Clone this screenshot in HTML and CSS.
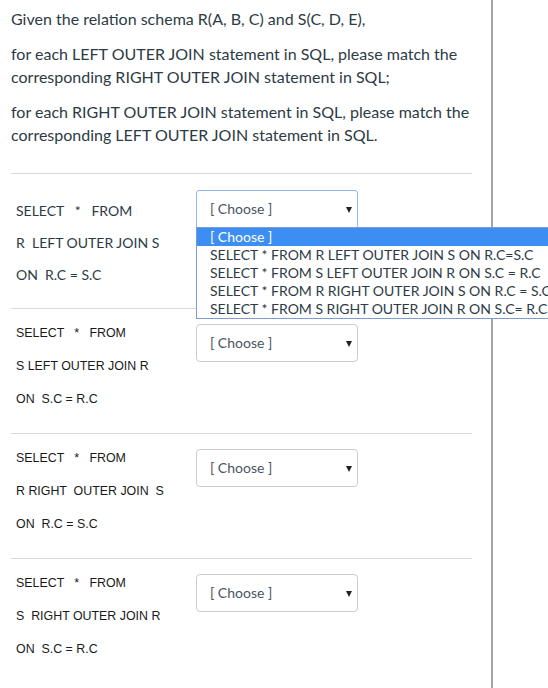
FILE: index.html
```html
<!DOCTYPE html>
<html lang="en">
<head>
    <meta charset="UTF-8">
    <meta name="viewport" content="width=device-width, initial-scale=1.0">
    <title>Matching</title>
    <link rel="stylesheet" href="styles.css">
</head>
<body>
    <div class="page">
        <main class="question">
            <div class="q-text">
                <p>Given the relation schema R(A, B, C) and S(C, D, E),</p>
                <p>for each LEFT OUTER JOIN statement in SQL, please match the corresponding RIGHT OUTER JOIN statement in SQL;</p>
                <p>for each RIGHT OUTER JOIN statement in SQL, please match the corresponding LEFT OUTER JOIN statement in SQL.</p>
            </div>

            <div class="m-row first">
                <div class="answer lato">
                    <p>SELECT &nbsp; * &nbsp; FROM</p>
                    <p>R &nbsp;LEFT OUTER JOIN S</p>
                    <p>ON &nbsp;R.C = S.C</p>
                </div>
                <div class="pick">
                    <div class="choose open">[ Choose ]<span class="arrow"></span></div>
                    <ul class="options">
                        <li class="sel">[ Choose ]</li>
                        <li>SELECT * FROM R LEFT OUTER JOIN S ON R.C=S.C</li>
                        <li>SELECT * FROM S LEFT OUTER JOIN R ON S.C = R.C</li>
                        <li>SELECT * FROM R RIGHT OUTER JOIN S ON R.C = S.C</li>
                        <li>SELECT * FROM S RIGHT OUTER JOIN R ON S.C= R.C</li>
                    </ul>
                </div>
            </div>

            <div class="m-row">
                <div class="answer">
                    <p>SELECT &nbsp; * &nbsp; FROM</p>
                    <p>S LEFT OUTER JOIN R</p>
                    <p>ON &nbsp;S.C = R.C</p>
                </div>
                <div class="pick">
                    <div class="choose">[ Choose ]<span class="arrow"></span></div>
                </div>
            </div>

            <div class="m-row">
                <div class="answer">
                    <p>SELECT &nbsp; * &nbsp; FROM</p>
                    <p>R RIGHT &nbsp;OUTER JOIN &nbsp;S</p>
                    <p>ON &nbsp;R.C = S.C</p>
                </div>
                <div class="pick">
                    <div class="choose">[ Choose ]<span class="arrow"></span></div>
                </div>
            </div>

            <div class="m-row">
                <div class="answer">
                    <p>SELECT &nbsp; * &nbsp; FROM</p>
                    <p>S &nbsp;RIGHT OUTER JOIN R</p>
                    <p>ON &nbsp;S.C = R.C</p>
                </div>
                <div class="pick">
                    <div class="choose">[ Choose ]<span class="arrow"></span></div>
                </div>
            </div>
        </main>
    </div>
</body>
</html>
```

FILE: styles.css
```css
html, body { margin: 0; overflow: hidden; }
body {
    background: #fff;
    font-family: "Lato", "Helvetica Neue", Arial, sans-serif;
    color: #2d3b45;
}
.page {
    width: 491px;
    min-height: 688px;
    border-right: 2px solid #a5a5a5;
}
.question { padding: 0 0 0 11px; width: 461px; }

.q-text { padding: 7px 0 15px; width: 470px; }
.q-text p {
    margin: 0 0 12px;
    font-size: 16px;
    line-height: 23px;
}

.m-row {
    display: flex;
    border-top: 1px solid #d7dadd;
    padding: 8px 0 17px 5px;
}
.m-row.first { padding-top: 21px; padding-bottom: 17px; }
.answer { width: 180px; }
.answer p {
    margin: 0;
    font-family: "Liberation Sans", Arial, sans-serif;
    font-size: 12.4px;
    line-height: 33px;
    color: #1a1a1a;
}
.answer.lato p {
    font-family: "Lato", Arial, sans-serif;
    font-size: 14px;
    line-height: 32px;
    color: #2d3b45;
}

.pick { position: relative; margin-top: 7px; }
.m-row.first .pick { margin-top: -5px; }
.choose {
    box-sizing: border-box;
    width: 162px;
    height: 38px;
    padding: 0 0 0 13px;
    border: 1px solid #c7cdd1;
    border-radius: 4px;
    font-size: 14px;
    line-height: 36px;
    color: #4a5560;
    position: relative;
}
.choose.open { border-color: #95b5ee; border-radius: 3px 3px 0 0; }
.arrow {
    position: absolute;
    right: 5px;
    top: 16px;
    border-left: 3.5px solid transparent;
    border-right: 3.5px solid transparent;
    border-top: 6px solid #222;
}

.options {
    position: absolute;
    top: 37px;
    left: 0;
    width: 360px;
    margin: 0;
    padding: 0;
    list-style: none;
    background: #fff;
    border: 1px solid #7d9bcf;
    z-index: 5;
}
.options li {
    padding-left: 13px;
    font-size: 14px;
    line-height: 18px;
    color: #2d3b45;
    white-space: nowrap;
}
.options li.sel { background: #3d8ef2; color: #fff; }
```
